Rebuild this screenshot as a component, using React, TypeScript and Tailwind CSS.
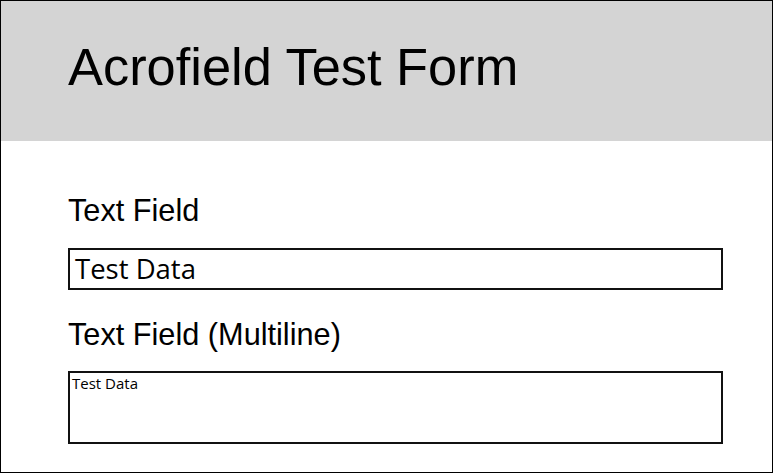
export default function App() {
  return (
    <div className="h-[473px] w-[773px] overflow-hidden border border-black bg-white font-['Liberation_Sans',Arial,sans-serif] text-black">
      <header className="h-[140px] bg-[#d4d4d4] pl-[67px] pt-[34px]">
        <h1 className="text-[52.4px] leading-[64px]">Acrofield Test Form</h1>
      </header>

      <main className="flex flex-col pl-[67px] pr-[49px] pt-[54px]">
        <label className="text-[30.7px] leading-[32px]">Text Field</label>
        <div className="mt-[21px] h-[42px] border-2 border-[#111] pl-[5px] font-['Open_Sans',sans-serif] text-[27.5px] leading-[37px]">
          Test Data
        </div>

        <label className="mt-[29px] text-[30.7px] leading-[32px]">Text Field (Multiline)</label>
        <div className="mt-[20px] h-[73px] border-2 border-[#111] pl-[2px] pt-[2px] font-['Open_Sans',sans-serif] text-[15px] leading-[17px]">
          Test Data
        </div>
      </main>
    </div>
  );
}
